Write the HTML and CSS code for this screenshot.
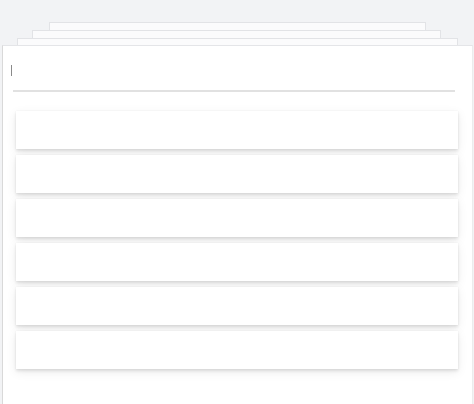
FILE: index.html
```html
<!DOCTYPE html>
<html>
<head>
<meta charset="utf-8">
<link rel="stylesheet" href="styles.css">
</head>
<body>
<div class="stack">
  <div class="layer layer3"></div>
  <div class="layer layer2"></div>
  <div class="layer layer1"></div>
  <div class="panel">
    <div class="input"><span class="caret"></span></div>
    <div class="divider"></div>
    <div class="list">
      <div class="card"></div>
      <div class="card"></div>
      <div class="card"></div>
      <div class="card"></div>
      <div class="card"></div>
      <div class="card"></div>
    </div>
  </div>
</div>
</body>
</html>
```
FILE: styles.css
```css
html, body {
  margin: 0;
  padding: 0;
  background: #f2f3f5;
  font-family: "Liberation Sans", Arial, sans-serif;
  overflow: hidden;
}
.stack {
  padding-top: 22px;
}
.layer {
  height: 7px;
  background: #fbfbfc;
  border: 1px solid #e2e3e6;
  border-bottom: none;
}
.layer3 { margin: 0 48px 0 49px; }
.layer2 { margin: 0 33px 0 32px; }
.layer1 { margin: 0 16px 0 17px; height: 6px; }
.panel {
  margin: 0 1px 0 2px;
  background: #ffffff;
  border-top: 1px solid #e4e5e8;
  border-left: 1px solid #d9d9d9;
  border-right: 1px solid #ececec;
  height: 358px;
}
.input {
  height: 44px;
  display: flex;
  align-items: center;
  padding-left: 8px;
}
.caret {
  width: 1px;
  height: 11px;
  background: #8a8a8a;
  margin-top: 5px;
}
.divider {
  height: 2px;
  background: #e1e1e1;
  margin: 0 17px 0 10px;
}
.list {
  display: flex;
  flex-direction: column;
  gap: 6px;
  padding: 19px 14px 0 13px;
}
.card {
  height: 38px;
  background: #ffffff;
  box-shadow: 0 3px 10px rgba(0, 0, 0, 0.08), 0 2px 3px rgba(0, 0, 0, 0.1), 0 0 1px rgba(0, 0, 0, 0.08);
}
```
